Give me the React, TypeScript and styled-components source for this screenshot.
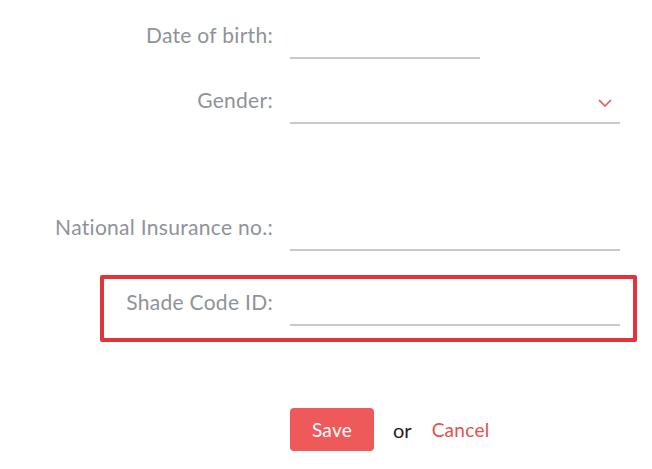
import React from "react";
import styled, { createGlobalStyle } from "styled-components";

const GlobalStyle = createGlobalStyle`
  html, body {
    margin: 0;
    padding: 0;
    background: #ffffff;
  }
  body {
    font-family: Lato, "Open Sans", sans-serif;
  }
`;

const Page = styled.form`
  width: 652px;
  height: 469px;
  padding-top: 17px;
  box-sizing: border-box;
  display: flex;
  flex-direction: column;
`;

const Row = styled.div<{ $labelWidth?: number; $top?: number }>`
  display: grid;
  grid-template-columns: ${(p) => p.$labelWidth ?? 273}px 330px;
  column-gap: 17px;
  align-items: end;
  margin-top: ${(p) => p.$top ?? 0}px;
`;

const Label = styled.label`
  text-align: right;
  font-size: 21px;
  line-height: 24px;
  letter-spacing: 0.3px;
  color: #8e9399;
  padding-bottom: 12px;
  white-space: nowrap;
`;

const Field = styled.div<{ $width?: number }>`
  position: relative;
  width: ${(p) => p.$width ?? 330}px;
  height: 40px;
  border-bottom: 2px solid #c6c9cd;
`;

const Input = styled.input`
  width: 100%;
  height: 100%;
  border: none;
  outline: none;
  background: transparent;
  font-family: inherit;
  font-size: 18px;
  color: #444;
  padding: 0;
`;

const Chevron = styled.svg`
  position: absolute;
  right: 8px;
  top: 17px;
`;

const Highlight = styled.div`
  margin-top: 24px;
  margin-left: 100px;
  width: 537px;
  box-sizing: border-box;
  border: 4px solid #e2333a;
  border-radius: 2px;
  padding-top: 5px;
  padding-bottom: 12px;
`;

const Actions = styled.div`
  margin-top: 66px;
  margin-left: 290px;
  display: flex;
  align-items: center;
`;

const SaveButton = styled.button`
  width: 84px;
  height: 43px;
  border: none;
  border-radius: 4px;
  background: #ee5a5a;
  color: #ffffff;
  font-family: inherit;
  font-size: 19px;
  letter-spacing: 0.3px;
  cursor: pointer;
`;

const Or = styled.span`
  margin-left: 19px;
  font-size: 20px;
  color: #222;
`;

const CancelLink = styled.a`
  margin-left: 20px;
  font-size: 19px;
  letter-spacing: 0.3px;
  color: #e6504f;
  text-decoration: none;
  cursor: pointer;
`;

export default function App() {
  return (
    <>
      <GlobalStyle />
      <Page onSubmit={(e) => e.preventDefault()}>
        <Row>
          <Label>Date of birth:</Label>
          <Field $width={190}>
            <Input />
          </Field>
        </Row>
        <Row $top={23}>
          <Label>Gender:</Label>
          <Field>
            <Chevron width="14" height="8" viewBox="0 0 14 8">
              <path d="M1 1 L7 7 L13 1" fill="none" stroke="#e9504f" strokeWidth="1.5" />
            </Chevron>
          </Field>
        </Row>
        <Row $top={85}>
          <Label>National Insurance no.:</Label>
          <Field>
            <Input />
          </Field>
        </Row>
        <Highlight>
          <Row $labelWidth={169}>
            <Label>Shade Code ID:</Label>
            <Field>
              <Input />
            </Field>
          </Row>
        </Highlight>
        <Actions>
          <SaveButton type="submit">Save</SaveButton>
          <Or>or</Or>
          <CancelLink>Cancel</CancelLink>
        </Actions>
      </Page>
    </>
  );
}
